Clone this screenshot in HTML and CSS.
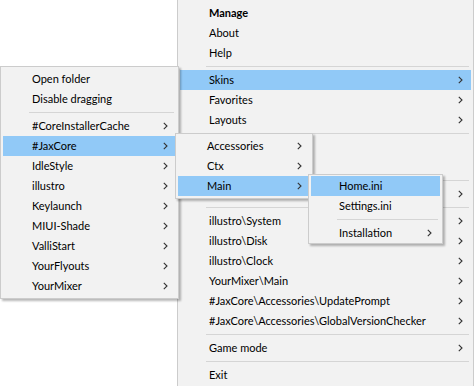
FILE: index.html
```html
<!DOCTYPE html>
<html>
<head>
<meta charset="utf-8">
<link rel="stylesheet" href="styles.css">
</head>
<body>
<div class="desk">
  <div class="menu menu-main">
    <div class="item"><span class="label bold">Manage</span></div>
    <div class="item"><span class="label">About</span></div>
    <div class="item"><span class="label">Help</span></div>
    <div class="sep"></div>
    <div class="item hl"><span class="label">Skins</span><svg class="arrow" viewBox="0 0 5 8"><polyline points="0.8,0.8 4,4 0.8,7.2"/></svg></div>
    <div class="item"><span class="label">Favorites</span><svg class="arrow" viewBox="0 0 5 8"><polyline points="0.8,0.8 4,4 0.8,7.2"/></svg></div>
    <div class="item"><span class="label">Layouts</span><svg class="arrow" viewBox="0 0 5 8"><polyline points="0.8,0.8 4,4 0.8,7.2"/></svg></div>
    <div class="sep"></div>
    <div class="item"><span class="label"></span></div>
    <div class="item"><span class="label"></span></div>
    <div class="sep"></div>
    <div class="item"><span class="label"></span><svg class="arrow" viewBox="0 0 5 8"><polyline points="0.8,0.8 4,4 0.8,7.2"/></svg></div>
    <div class="sep"></div>
    <div class="item"><span class="label">illustro\System</span><svg class="arrow" viewBox="0 0 5 8"><polyline points="0.8,0.8 4,4 0.8,7.2"/></svg></div>
    <div class="item"><span class="label">illustro\Disk</span><svg class="arrow" viewBox="0 0 5 8"><polyline points="0.8,0.8 4,4 0.8,7.2"/></svg></div>
    <div class="item"><span class="label">illustro\Clock</span><svg class="arrow" viewBox="0 0 5 8"><polyline points="0.8,0.8 4,4 0.8,7.2"/></svg></div>
    <div class="item"><span class="label">YourMixer\Main</span><svg class="arrow" viewBox="0 0 5 8"><polyline points="0.8,0.8 4,4 0.8,7.2"/></svg></div>
    <div class="item"><span class="label">#JaxCore\Accessories\UpdatePrompt</span><svg class="arrow" viewBox="0 0 5 8"><polyline points="0.8,0.8 4,4 0.8,7.2"/></svg></div>
    <div class="item"><span class="label">#JaxCore\Accessories\GlobalVersionChecker</span><svg class="arrow" viewBox="0 0 5 8"><polyline points="0.8,0.8 4,4 0.8,7.2"/></svg></div>
    <div class="sep"></div>
    <div class="item"><span class="label">Game mode</span><svg class="arrow" viewBox="0 0 5 8"><polyline points="0.8,0.8 4,4 0.8,7.2"/></svg></div>
    <div class="sep"></div>
    <div class="item"><span class="label">Exit</span></div>
  </div>

  <div class="menu menu-skins">
    <div class="item"><span class="label">Open folder</span></div>
    <div class="item"><span class="label">Disable dragging</span></div>
    <div class="sep"></div>
    <div class="item"><span class="label">#CoreInstallerCache</span><svg class="arrow" viewBox="0 0 5 8"><polyline points="0.8,0.8 4,4 0.8,7.2"/></svg></div>
    <div class="item hl"><span class="label">#JaxCore</span><svg class="arrow" viewBox="0 0 5 8"><polyline points="0.8,0.8 4,4 0.8,7.2"/></svg></div>
    <div class="item"><span class="label">IdleStyle</span><svg class="arrow" viewBox="0 0 5 8"><polyline points="0.8,0.8 4,4 0.8,7.2"/></svg></div>
    <div class="item"><span class="label">illustro</span><svg class="arrow" viewBox="0 0 5 8"><polyline points="0.8,0.8 4,4 0.8,7.2"/></svg></div>
    <div class="item"><span class="label">Keylaunch</span><svg class="arrow" viewBox="0 0 5 8"><polyline points="0.8,0.8 4,4 0.8,7.2"/></svg></div>
    <div class="item"><span class="label">MIUI-Shade</span><svg class="arrow" viewBox="0 0 5 8"><polyline points="0.8,0.8 4,4 0.8,7.2"/></svg></div>
    <div class="item"><span class="label">ValliStart</span><svg class="arrow" viewBox="0 0 5 8"><polyline points="0.8,0.8 4,4 0.8,7.2"/></svg></div>
    <div class="item"><span class="label">YourFlyouts</span><svg class="arrow" viewBox="0 0 5 8"><polyline points="0.8,0.8 4,4 0.8,7.2"/></svg></div>
    <div class="item"><span class="label">YourMixer</span><svg class="arrow" viewBox="0 0 5 8"><polyline points="0.8,0.8 4,4 0.8,7.2"/></svg></div>
  </div>

  <div class="menu menu-jax">
    <div class="item"><span class="label">Accessories</span><svg class="arrow" viewBox="0 0 5 8"><polyline points="0.8,0.8 4,4 0.8,7.2"/></svg></div>
    <div class="item"><span class="label">Ctx</span><svg class="arrow" viewBox="0 0 5 8"><polyline points="0.8,0.8 4,4 0.8,7.2"/></svg></div>
    <div class="item hl"><span class="label">Main</span><svg class="arrow" viewBox="0 0 5 8"><polyline points="0.8,0.8 4,4 0.8,7.2"/></svg></div>
  </div>

  <div class="menu menu-sub">
    <div class="item hl"><span class="label">Home.ini</span></div>
    <div class="item"><span class="label">Settings.ini</span></div>
    <div class="sep"></div>
    <div class="item"><span class="label">Installation</span><svg class="arrow" viewBox="0 0 5 8"><polyline points="0.8,0.8 4,4 0.8,7.2"/></svg></div>
  </div>
</div>
</body>
</html>
```

FILE: styles.css
```css
html, body {
  margin: 0;
  padding: 0;
  background: #ffffff;
}

.desk {
  position: relative;
  width: 474px;
  height: 386px;
  overflow: hidden;
  font-family: "Lato", "Noto Sans", sans-serif;
  font-size: 11px;
  color: #000;
}

.menu {
  position: absolute;
  box-sizing: border-box;
  display: flex;
  flex-direction: column;
  background: #f2f2f2;
  border: 1px solid #cccccc;
  padding: 2px;
  box-shadow: 2px 2px 2px rgba(0, 0, 0, 0.28);
}

.menu-main {
  left: 177px;
  top: -1px;
  width: 297px;
  height: 390px;
  padding-top: 3px;
}

.menu-skins {
  left: 0;
  top: 66px;
  width: 179px;
}

.menu-jax {
  left: 175px;
  top: 133px;
  width: 138px;
}

.menu-sub {
  left: 308px;
  top: 174px;
  width: 135px;
  padding-top: 1px;
  padding-bottom: 0;
}

.item {
  height: 20px;
  display: flex;
  align-items: center;
  padding: 0 8px 0 29px;
  white-space: nowrap;
}

.menu-sub .item {
  padding-left: 28px;
}

.item.hl {
  background: #91c9f7;
}

.label {
  flex: 1;
  line-height: 20px;
}

.bold {
  font-weight: bold;
}

.arrow {
  width: 5px;
  height: 8px;
  flex: none;
}

.arrow polyline {
  fill: none;
  stroke: #333;
  stroke-width: 1.1;
}

.sep {
  height: 1px;
  margin: 3px 2px 3px 26px;
  background: #d5d5d5;
}
```
